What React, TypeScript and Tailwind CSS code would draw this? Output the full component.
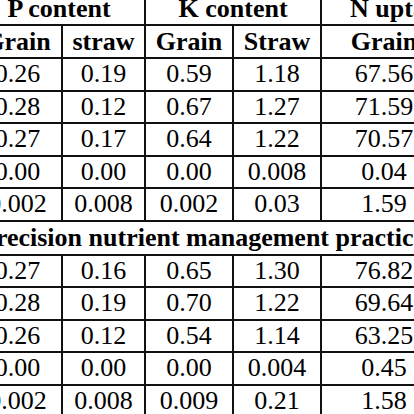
const rowsA = [
  ["0.26", "0.19", "0.59", "1.18", "67.56"],
  ["0.28", "0.12", "0.67", "1.27", "71.59"],
  ["0.27", "0.17", "0.64", "1.22", "70.57"],
  ["0.00", "0.00", "0.00", "0.008", "0.04"],
  ["0.002", "0.008", "0.002", "0.03", "1.59"],
];

const rowsB = [
  ["0.27", "0.16", "0.65", "1.30", "76.82"],
  ["0.28", "0.19", "0.70", "1.22", "69.64"],
  ["0.26", "0.12", "0.54", "1.14", "63.25"],
  ["0.00", "0.00", "0.00", "0.004", "0.45"],
  ["0.002", "0.008", "0.009", "0.21", "1.58"],
];

const cell = "border-2 border-[#111] text-center whitespace-nowrap p-0";

function DataRow({ values }: { values: string[] }) {
  return (
    <tr className="h-[32.5px]">
      {values.map((v, i) => (
        <td key={i} className={cell}>
          {v}
        </td>
      ))}
      <td className={cell}></td>
    </tr>
  );
}

export default function App() {
  return (
    <div className="w-[414px] h-[414px] overflow-hidden bg-white font-['Liberation_Serif','Times_New_Roman',serif]">
      <table className="table-fixed w-[574px] border-collapse text-[26px] leading-[1.15] text-black ml-[-28px] mt-[-8px] font-['Liberation_Serif','Times_New_Roman',serif]">
        <colgroup>
          <col className="w-[89px]" />
          <col className="w-[83px]" />
          <col className="w-[88px]" />
          <col className="w-[88px]" />
          <col className="w-[126px]" />
          <col className="w-[100px]" />
        </colgroup>
        <thead className="font-bold">
          <tr className="h-[32px]">
            <th colSpan={2} className={cell}>
              P content
            </th>
            <th colSpan={2} className={cell}>
              K content
            </th>
            <th colSpan={2} className={`${cell} !text-left pl-[28px]`}>
              N uptake
            </th>
          </tr>
          <tr className="h-[33px]">
            <th className={cell}>Grain</th>
            <th className={cell}>straw</th>
            <th className={cell}>Grain</th>
            <th className={cell}>Straw</th>
            <th className={cell}>Grain</th>
            <th className={cell}>Straw</th>
          </tr>
        </thead>
        <tbody>
          {rowsA.map((r, i) => (
            <DataRow key={i} values={r} />
          ))}
          <tr className="h-[34px]">
            <td colSpan={6} className={`${cell} !text-left pl-[6px] font-bold`}>
              Precision nutrient management practices
            </td>
          </tr>
          {rowsB.map((r, i) => (
            <DataRow key={i} values={r} />
          ))}
        </tbody>
      </table>
    </div>
  );
}
